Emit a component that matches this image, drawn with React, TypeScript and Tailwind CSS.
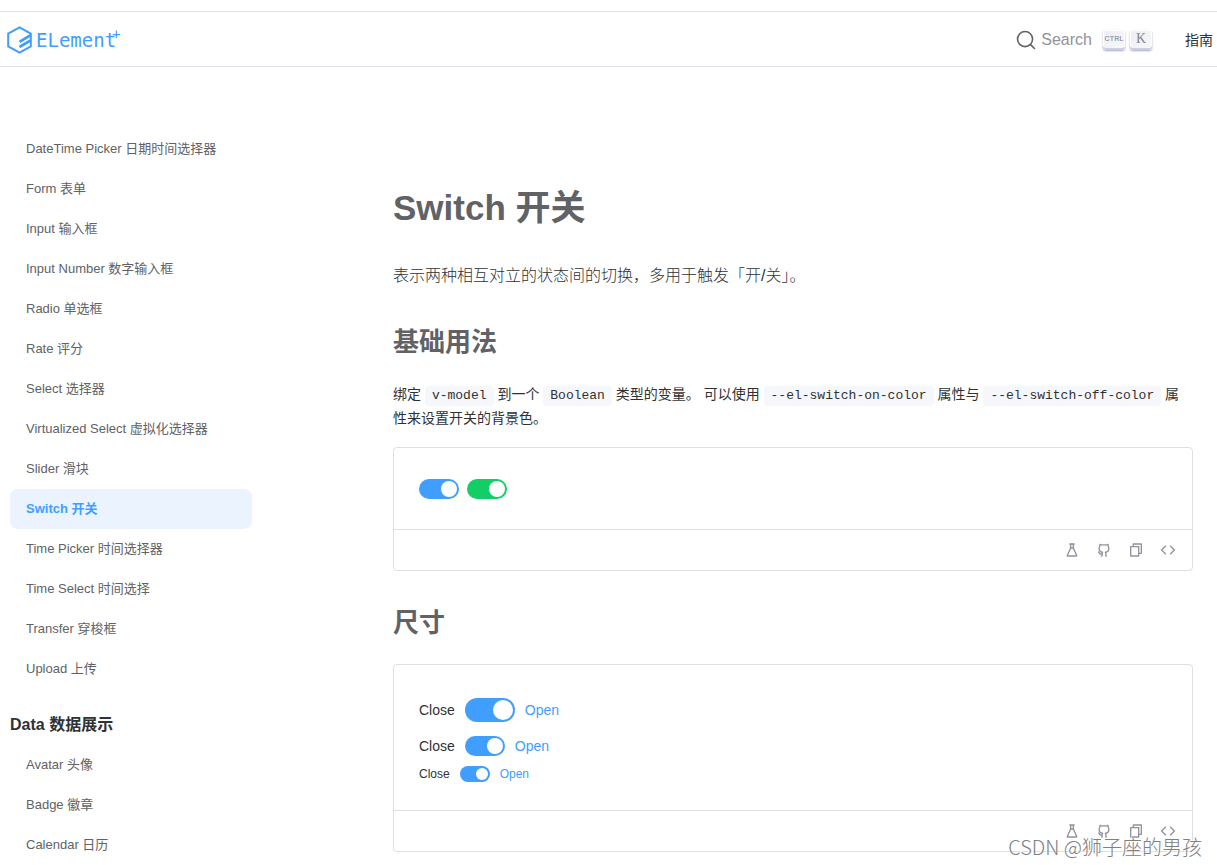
import type { ReactNode } from "react";
import { RiCodeLine, RiFileCopyLine, RiFlaskLine, RiGithubLine } from "react-icons/ri";

const formLinks = [
  "DateTime Picker 日期时间选择器",
  "Form 表单",
  "Input 输入框",
  "Input Number 数字输入框",
  "Radio 单选框",
  "Rate 评分",
  "Select 选择器",
  "Virtualized Select 虚拟化选择器",
  "Slider 滑块",
  "Switch 开关",
  "Time Picker 时间选择器",
  "Time Select 时间选择",
  "Transfer 穿梭框",
  "Upload 上传",
];
const dataLinks = ["Avatar 头像", "Badge 徽章", "Calendar 日历"];

function NavLink({ text, active }: { text: string; active?: boolean }) {
  return (
    <a
      href="#"
      aria-current={active ? "page" : undefined}
      className={
        "flex h-10 items-center rounded-lg px-4 text-[13px] " +
        (active ? "bg-[#ebf3ff] font-bold text-[#409eff]" : "text-[#606266]")
      }
    >
      {text}
    </a>
  );
}

const switchSizes = {
  large: "h-6 w-[50px] before:size-5",
  default: "h-5 w-10 before:size-4",
  small: "h-4 w-[30px] before:size-3",
};

function Switch({
  size = "default",
  green,
  label,
}: {
  size?: keyof typeof switchSizes;
  green?: boolean;
  label?: string;
}) {
  return (
    <input
      type="checkbox"
      role="switch"
      defaultChecked
      aria-label={label}
      className={
        "flex shrink-0 cursor-pointer appearance-none items-center rounded-full px-0.5 before:rounded-full before:bg-white before:content-[''] checked:justify-end " +
        (green ? "bg-[#ff4949] checked:bg-[#13ce66] " : "bg-[#dcdfe6] checked:bg-[#409eff] ") +
        switchSizes[size]
      }
    />
  );
}

function LabelledSwitch({ size, row }: { size: keyof typeof switchSizes; row: string }) {
  return (
    <label className={"flex items-center gap-2.5 " + row}>
      <span>Close</span>
      <Switch size={size} />
      <span className="text-[#409eff]">Open</span>
    </label>
  );
}

function Demo({ children }: { children: ReactNode }) {
  return (
    <div className="rounded border border-[#dcdfe6]">
      <div className="px-[25px] pt-[25px] pb-6">{children}</div>
      <div className="flex h-[41px] items-center justify-end gap-4 border-t border-[#dcdfe6] px-4 text-base text-[#909399]">
        <button aria-label="Playground"><RiFlaskLine /></button>
        <button aria-label="GitHub"><RiGithubLine /></button>
        <button aria-label="Copy code"><RiFileCopyLine /></button>
        <button aria-label="View source"><RiCodeLine /></button>
      </div>
    </div>
  );
}

function Code({ children }: { children: ReactNode }) {
  return (
    <code className="inline-block rounded bg-[#f5f7fa] px-[7px] font-['Liberation_Mono',monospace] text-[13px] leading-5">
      {children}
    </code>
  );
}

function Key({ children }: { children: ReactNode }) {
  return (
    <kbd className="flex h-5 w-[22px] items-center justify-center rounded-[3px] bg-linear-to-br from-[#eeeef2] to-[#f8f8f8] pb-0.5 leading-none text-[#7f8497] shadow-[inset_0_-2px_0_0_#cdcde6,inset_0_0_1px_1px_#fff,0_1px_2px_0_rgba(30,35,90,0.4)]">
      {children}
    </kbd>
  );
}

export default function App() {
  return (
    <div className="relative min-h-screen bg-white pt-[11px] font-['Liberation_Sans','Noto_Sans_CJK_SC',sans-serif] text-sm text-[#303133]">
      <header className="flex h-14 items-center justify-between border-y border-[#dcdfe6] pt-0.5 pr-1 pl-[7px]">
        <a href="#" aria-label="Element Plus" className="flex items-center gap-1 text-[#409eff]">
          <svg className="h-7 w-[25px]" viewBox="0 0 25 28" fill="none">
            <path
              d="M12.5 1.3L23.8 7.7V20.3L12.5 26.7L1.2 20.3V7.7Z"
              stroke="currentColor"
              strokeWidth="2"
            />
            <path d="M12.5 15.8L24 9M12.5 21L24 14.2" stroke="currentColor" strokeWidth="2.7" />
          </svg>
          <span className="flex font-['DejaVu_Sans_Mono',monospace] text-[19px] leading-7">
            ELement<span className="-ml-1 text-sm leading-4">+</span>
          </span>
        </a>
        <div className="flex items-center">
          <button className="flex items-center text-base text-[#909399]">
            <svg className="mr-[5px] size-5 text-[#606266]" viewBox="0 0 20 20" fill="none" aria-hidden="true">
              <path
                d="M14.386 14.386l4.088 4.088-4.088-4.088c-2.942 2.942-7.711 2.942-10.653 0-2.942-2.942-2.942-7.711 0-10.653 2.942-2.942 7.711-2.942 10.653 0 2.942 2.942 2.942 7.711 0 10.653z"
                stroke="currentColor"
                strokeWidth="1.6"
                strokeLinecap="round"
                strokeLinejoin="round"
              />
            </svg>
            <span>Search</span>
            <span className="mr-px ml-[11px] flex gap-[5px]">
              <Key><span className="font-['Roboto',sans-serif] text-[8px]">CTRL</span></Key>
              <Key><span className="font-['Liberation_Serif',serif] text-sm leading-none">K</span></Key>
            </span>
          </button>
          <a href="#" className="ml-8">指南</a>
        </div>
      </header>

      <div className="flex">
        <nav className="w-[252px] shrink-0 pt-[62px] pl-2.5">
          {formLinks.map((text) => (
            <NavLink key={text} text={text} active={text.startsWith("Switch")} />
          ))}
          <h2 className="mt-6 mb-2 text-base leading-6 font-bold">Data 数据展示</h2>
          {dataLinks.map((text) => (
            <NavLink key={text} text={text} />
          ))}
        </nav>

        <main className="mr-6 ml-[141px] min-w-0 flex-1 pt-[119px]">
          <h1 className="text-[35px] leading-11 font-bold text-[#606266]">Switch 开关</h1>
          <p className="mt-[34px] text-base leading-6 font-light">
            表示两种相互对立的状态间的切换，多用于触发「开/关」。
          </p>
          <h2 className="mt-9 text-[26px] leading-9 font-bold text-[#606266]">基础用法</h2>
          <p className="mt-[22px] mb-[17px] leading-6">
            绑定 <Code>v-model</Code> 到一个 <Code>Boolean</Code> 类型的变量。 可以使用{" "}
            <Code>--el-switch-on-color</Code> 属性与 <Code>--el-switch-off-color</Code> 属性来设置开关的背景色。
          </p>
          <Demo>
            <div className="flex h-8 items-center gap-2">
              <Switch label="Blue switch" />
              <Switch label="Green switch" green />
            </div>
          </Demo>
          <h2 className="mt-[34px] mb-[23px] text-[26px] leading-9 font-bold text-[#606266]">尺寸</h2>
          <Demo>
            <LabelledSwitch size="large" row="h-10" />
            <LabelledSwitch size="default" row="h-8" />
            <LabelledSwitch size="small" row="h-6 text-xs" />
          </Demo>
        </main>
      </div>

      <div className="pointer-events-none absolute right-[15px] bottom-1 font-['Noto_Sans_CJK_SC',sans-serif] text-xl leading-7 font-light text-[#808080] [text-shadow:-1px_-1px_0_#fff]">
        CSDN @狮子座的男孩
      </div>
    </div>
  );
}
